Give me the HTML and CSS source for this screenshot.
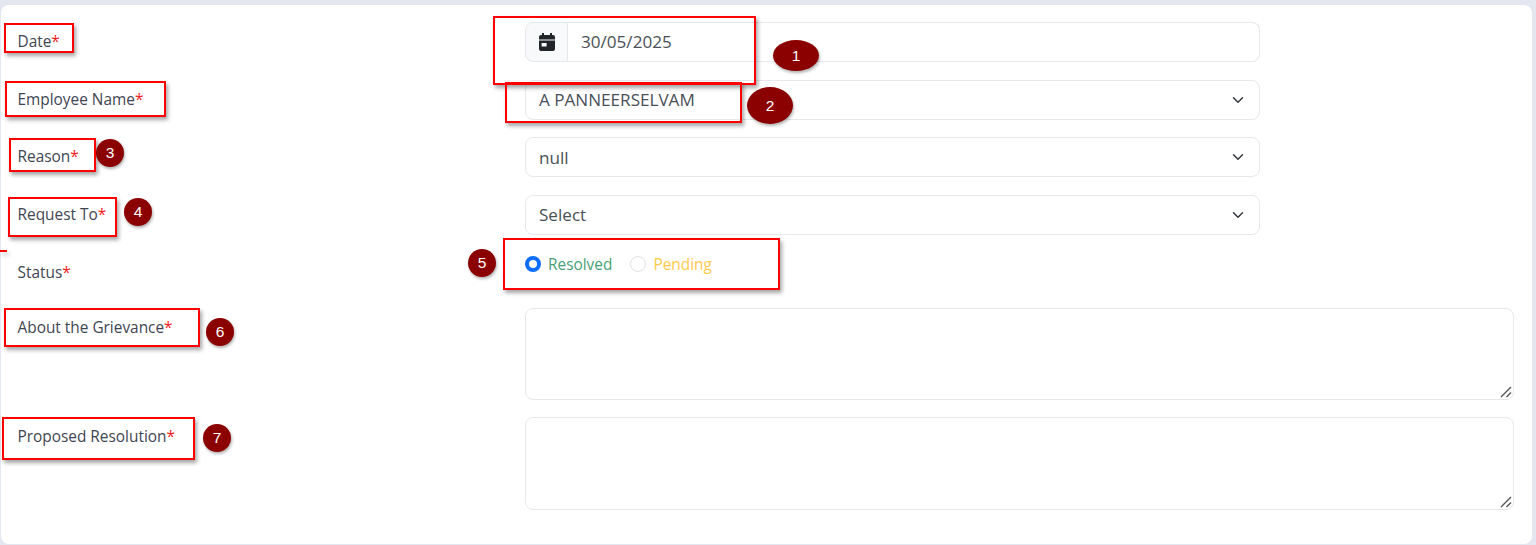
FILE: index.html
```html
<!DOCTYPE html>
<html lang="en">
<head>
    <title>Grievance Form</title>
    <meta content="width=device-width, initial-scale=1" name="viewport" />
    <link rel="stylesheet" href="styles.css">
</head>
<body>
    <main class="card">
        <form class="form-grid">
            <label class="form-label">Date<span class="req">*</span></label>
            <div class="field field-short date-group">
                <span class="date-addon">
                    <svg width="16" height="18" viewBox="0 0 16 18"><path fill="#212529" fill-rule="evenodd" d="M3 0h2v2h6V0h2v2h1a2 2 0 0 1 2 2v2.4H0V4a2 2 0 0 1 2-2h1zM0 7.4h16V16a2 2 0 0 1-2 2H2a2 2 0 0 1-2-2zM2.6 10v3.6h5V10z"/></svg>
                </span>
                <input class="date-input" type="text" value="30/05/2025">
            </div>

            <label class="form-label">Employee Name<span class="req">*</span></label>
            <div class="field field-short">
                <select class="form-select"><option>A PANNEERSELVAM</option></select>
            </div>

            <label class="form-label">Reason<span class="req">*</span></label>
            <div class="field field-short">
                <select class="form-select"><option>null</option></select>
            </div>

            <label class="form-label">Request To<span class="req">*</span></label>
            <div class="field field-short">
                <select class="form-select"><option>Select</option></select>
            </div>

            <label class="form-label">Status<span class="req">*</span></label>
            <div class="field radio-row">
                <label class="radio-item resolved"><input type="radio" name="status" checked>Resolved</label>
                <label class="radio-item pending"><input type="radio" name="status">Pending</label>
            </div>

            <label class="form-label">About the Grievance<span class="req">*</span></label>
            <div class="field text-wrap">
                <textarea class="form-text"></textarea>
                <svg class="grip" width="12" height="12" viewBox="0 0 12 12"><path d="M1 11 11 1M6.5 11 11 6.5" stroke="#555" stroke-width="1.4" fill="none"/></svg>
            </div>

            <label class="form-label">Proposed Resolution<span class="req">*</span></label>
            <div class="field text-wrap">
                <textarea class="form-text"></textarea>
                <svg class="grip" width="12" height="12" viewBox="0 0 12 12"><path d="M1 11 11 1M6.5 11 11 6.5" stroke="#555" stroke-width="1.4" fill="none"/></svg>
            </div>
        </form>
    </main>

    <!-- annotations drawn over the screenshot -->
    <div class="mark" style="left:4px;top:23px;width:70px;height:30px"></div>
    <div class="mark" style="left:5px;top:81px;width:161px;height:36px"></div>
    <div class="mark" style="left:9px;top:138px;width:87px;height:34px"></div>
    <div class="mark" style="left:8px;top:197px;width:109px;height:40px"></div>
    <div class="mark" style="left:4px;top:308px;width:196px;height:39px"></div>
    <div class="mark" style="left:2px;top:417px;width:193px;height:43px"></div>
    <div class="mark" style="left:493px;top:16px;width:263px;height:69px"></div>
    <div class="mark" style="left:505px;top:82px;width:237px;height:41px"></div>
    <div class="mark" style="left:503px;top:238px;width:277px;height:52px"></div>
    <div class="mark-stub"></div>

    <div class="badge" style="left:773px;top:40px;width:46px;height:31px">1</div>
    <div class="badge" style="left:747px;top:87px;width:46px;height:37px">2</div>
    <div class="badge" style="left:96px;top:139px">3</div>
    <div class="badge" style="left:124px;top:198px">4</div>
    <div class="badge" style="left:468px;top:249px">5</div>
    <div class="badge" style="left:206px;top:318px">6</div>
    <div class="badge" style="left:203px;top:424px">7</div>
</body>
</html>
```

FILE: styles.css
```css
* {
    box-sizing: border-box;
}
html, body {
    height: 100%;
}
body {
    margin: 0;
    padding: 5px 4px 1px 1px;
    background: #e2e7f0;
    font-family: 'Open Sans', sans-serif;
    color: #495057;
    overflow: hidden;
}
.card {
    height: 100%;
    background: #fff;
    border-radius: 8px;
    padding: 17px 18px 0 16px;
}
.form-grid {
    display: grid;
    grid-template-columns: 508px 1fr;
    grid-template-rows: 40px 40px 40px 40px 37.5px 92px 93px;
    row-gap: 17.67px;
}
.form-label {
    padding-top: 9px;
    padding-left: 0.5px;
    font-size: 15.4px;
    line-height: 22px;
    color: #3f4652;
}
.req {
    color: #f01c1c;
}
.field-short {
    width: 735px;
}
.date-group {
    display: flex;
    height: 40px;
}
.date-addon {
    display: flex;
    align-items: center;
    justify-content: center;
    width: 43px;
    background: #f8f9fa;
    border: 1px solid #e6e8eb;
    border-radius: 8px 0 0 8px;
}
.date-input {
    flex: 1;
    min-width: 0;
    border: 1px solid #e6e8eb;
    border-left: none;
    border-radius: 0 8px 8px 0;
    padding: 0 13px 2px;
    font: 17.1px 'Open Sans', sans-serif;
    color: #495057;
    outline: none;
}
.form-select {
    display: block;
    width: 100%;
    height: 40px;
    padding: 0 36px 0 13px;
    border: 1px solid #e6e8eb;
    border-radius: 8px;
    font: 17.1px 'Open Sans', sans-serif;
    color: #495057;
    appearance: none;
    background: #fff url("data:image/svg+xml,%3csvg xmlns='http://www.w3.org/2000/svg' viewBox='0 0 16 16'%3e%3cpath fill='none' stroke='%23343a40' stroke-linecap='round' stroke-linejoin='round' stroke-width='2' d='m2 5 6 6 6-6'/%3e%3c/svg%3e") no-repeat right 14px center / 14px 12px;
}
.radio-row {
    display: flex;
    gap: 18px;
    align-items: flex-start;
}
.radio-item {
    display: flex;
    align-items: center;
    gap: 7px;
    font-size: 15.4px;
    line-height: 23px;
}
.radio-item input {
    appearance: none;
    width: 16px;
    height: 16px;
    margin: 0;
    border: 1px solid #dee2e6;
    border-radius: 50%;
    background: #fff;
}
.radio-item input:checked {
    border: 4.5px solid #0d6efd;
}
.resolved {
    color: #479f76;
}
.pending {
    color: #ffc94d;
}
.text-wrap {
    position: relative;
}
.form-text {
    display: block;
    width: 100%;
    height: 100%;
    border: 1px solid #e6e8eb;
    border-radius: 8px;
    outline: none;
    resize: none;
}
.grip {
    position: absolute;
    right: 2px;
    bottom: 2px;
    pointer-events: none;
}
.mark {
    position: absolute;
    border: 2px solid #f00;
    box-shadow: 2px 3px 4px rgba(0, 0, 0, 0.35);
}
.mark-stub {
    position: absolute;
    left: 0;
    top: 250px;
    width: 7px;
    height: 2px;
    background: #f00;
    box-shadow: 2px 3px 4px rgba(0, 0, 0, 0.3);
}
.badge {
    position: absolute;
    display: flex;
    align-items: center;
    justify-content: center;
    width: 28px;
    height: 28px;
    border-radius: 50%;
    background: #8b0000;
    color: #fff;
    font: 15.5px 'Liberation Sans', sans-serif;
    box-shadow: 1px 2px 3px rgba(0, 0, 0, 0.3);
}
```
